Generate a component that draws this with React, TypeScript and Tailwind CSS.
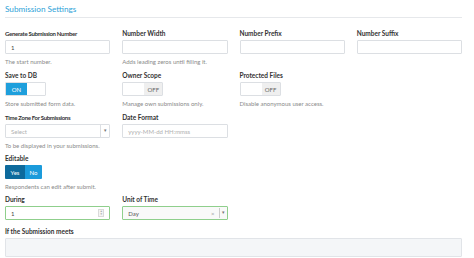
import { ReactNode } from 'react';

function Field({ label, help, small, children }: { label: string; help?: string; small?: boolean; children?: ReactNode }) {
  return (
    <div className="flex flex-col">
      <div
        className={`h-[8px] leading-[8px] font-bold text-[#333] whitespace-nowrap ${
          small ? 'text-[6px] tracking-[-0.3px]' : 'text-[6.5px]'
        }`}
      >
        {label}
      </div>
      <div className="mt-[2px]">{children}</div>
      {help && <div className="mt-[4px] h-[8px] leading-[8px] text-[6px] text-[#8a8a8a]">{help}</div>}
    </div>
  );
}

function TextInput({ value, placeholder }: { value?: string; placeholder?: string }) {
  return (
    <div className="h-[14px] border border-[#dcdfe3] bg-white rounded-[1px] px-[5px] flex items-center text-[6px]">
      {value ? <span className="text-[#444]">{value}</span> : <span className="text-[#b0b0b0]">{placeholder}</span>}
    </div>
  );
}

function Toggle({ on }: { on: boolean }) {
  return (
    <div className="h-[14px] w-[41px] flex border border-[#dcdfe3] rounded-[1px] text-[6px] overflow-hidden">
      {on ? (
        <>
          <div className="w-[21px] bg-[#1e9fdc] text-white flex items-center justify-center">ON</div>
          <div className="flex-1 bg-white" />
        </>
      ) : (
        <>
          <div className="w-[21px] bg-white" />
          <div className="flex-1 bg-[#efefef] text-[#666] flex items-center justify-center">OFF</div>
        </>
      )}
    </div>
  );
}

export default function App() {
  return (
    <div className="w-[474px] h-[258px] bg-white overflow-hidden font-['Lato',sans-serif] px-[5px]">
      <div className="w-[457px] h-[18px] pt-[5px] border-b border-[#e6e8eb] text-[8.2px] leading-[9px] text-[#2ea3d8]">
        Submission Settings
      </div>

      <div className="grid grid-cols-4 gap-x-[12px] w-[457px] mt-[12px]">
        <Field label="Generate Submission Number" help="The start number." small>
          <TextInput value="1" />
        </Field>
        <Field label="Number Width" help="Adds leading zeros until filling it.">
          <TextInput />
        </Field>
        <Field label="Number Prefix">
          <TextInput />
        </Field>
        <Field label="Number Suffix">
          <TextInput />
        </Field>
      </div>

      <div className="grid grid-cols-4 gap-x-[12px] w-[457px] mt-[6px]">
        <Field label="Save to DB" help="Store submitted form data.">
          <Toggle on />
        </Field>
        <Field label="Owner Scope" help="Manage own submissions only.">
          <Toggle on={false} />
        </Field>
        <Field label="Protected Files" help="Disable anonymous user access.">
          <Toggle on={false} />
        </Field>
      </div>

      <div className="grid grid-cols-4 gap-x-[12px] w-[457px] mt-[6px]">
        <Field label="Time Zone For Submissions" help="To be displayed in your submissions." small>
          <div className="h-[14px] border border-[#dcdfe3] rounded-[1px] flex items-center text-[6px]">
            <span className="flex-1 px-[5px] text-[#b0b0b0]">Select</span>
            <span className="w-[9px] h-full border-l border-[#dcdfe3] flex items-center justify-center text-[#777] text-[5px]">▾</span>
          </div>
        </Field>
        <Field label="Date Format">
          <TextInput placeholder="yyyy-MM-dd HH:mmss" />
        </Field>
      </div>

      <div className="grid grid-cols-4 gap-x-[12px] w-[457px] mt-[5px]">
        <Field label="Editable" help="Respondents can edit after submit.">
          <div className="h-[14px] w-[37px] flex text-[6px] text-white rounded-[1px] overflow-hidden">
            <div className="w-[20px] bg-[#0d6a9c] flex items-center justify-center">Yes</div>
            <div className="flex-1 bg-[#1b9bdb] flex items-center justify-center">No</div>
          </div>
        </Field>
      </div>

      <div className="grid grid-cols-4 gap-x-[12px] w-[457px] mt-[5px]">
        <Field label="During">
          <div className="h-[14px] border border-[#8fcf8c] rounded-[1px] flex items-center text-[6px] pl-[5px] pr-[5px]">
            <span className="flex-1 text-[#444]">1</span>
            <div className="w-[6px] h-[8px] border border-[#dadada] bg-[#f4f4f4] flex flex-col items-center justify-center text-[3px] leading-[3px] text-[#aaa]">
              <span>▲</span>
              <span>▼</span>
            </div>
          </div>
        </Field>
        <Field label="Unit of Time">
          <div className="h-[14px] border border-[#8fcf8c] bg-[#f9f9f9] rounded-[1px] flex items-center text-[6px]">
            <span className="flex-1 px-[5px] text-[#555]">Day</span>
            <span className="pr-[4px] text-[#999] text-[6px]">×</span>
            <span className="w-[8px] h-[10px] border-l border-[#ccc] flex items-center justify-center text-[#777] text-[5px]">▾</span>
          </div>
        </Field>
      </div>

      <div className="w-[457px] mt-[8px]">
        <div className="h-[8px] leading-[8px] text-[6.5px] font-bold text-[#333]">If the Submission meets</div>
        <div className="mt-[2px] h-[19px] border border-[#e1e4e8] bg-[#f4f6f8] rounded-[1px]" />
      </div>
    </div>
  );
}
